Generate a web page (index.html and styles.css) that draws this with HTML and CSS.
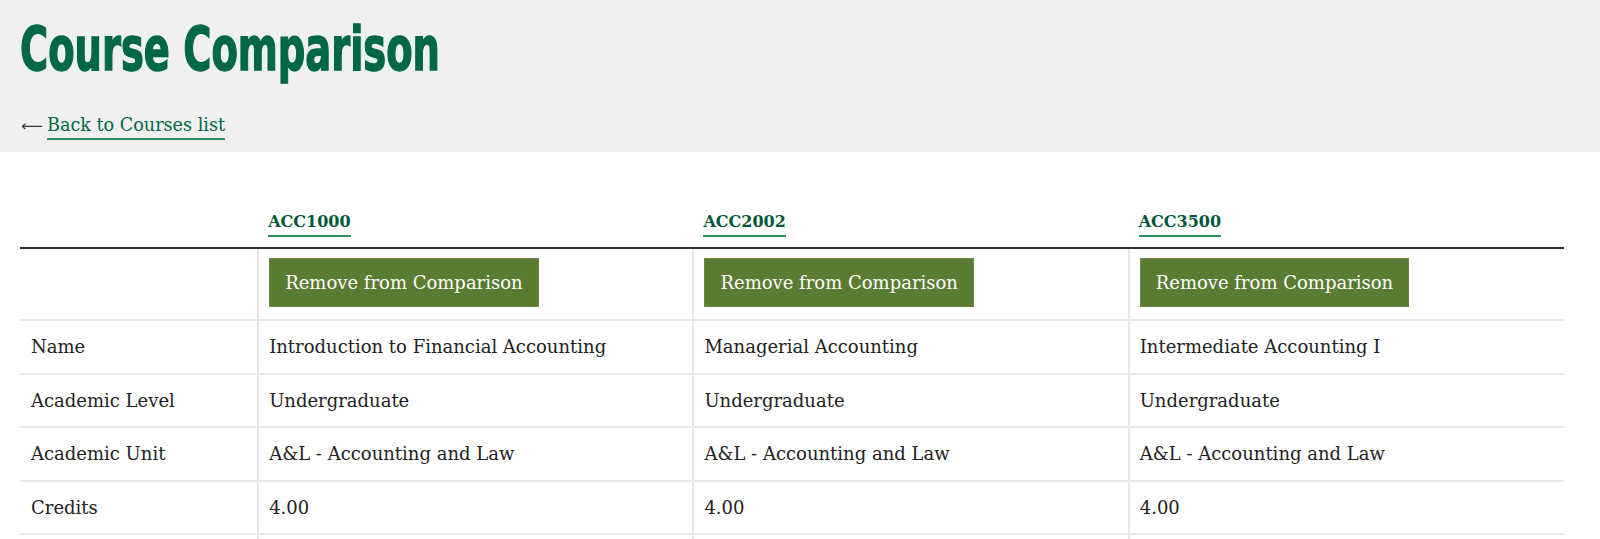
FILE: index.html
```html
<!DOCTYPE html>
<html lang="en">
<head>
<meta charset="utf-8">
<title>Course Comparison</title>
<link rel="stylesheet" href="styles.css">
</head>
<body>
<header class="page-header">
  <h1 class="page-title"><span class="title-text">Course Comparison</span></h1>
  <p class="back"><span class="arrow">&#x27F5;</span><a class="back-link" href="#">Back to Courses list</a></p>
</header>
<main class="content">
  <table class="compare">
    <colgroup>
      <col class="c-label">
      <col class="c-course">
      <col class="c-course">
      <col class="c-course">
    </colgroup>
    <thead>
      <tr>
        <th></th>
        <th><a class="code" href="#">ACC1000</a></th>
        <th><a class="code" href="#">ACC2002</a></th>
        <th><a class="code" href="#">ACC3500</a></th>
      </tr>
    </thead>
    <tbody>
      <tr class="btn-row">
        <td></td>
        <td><button class="remove" type="button">Remove from Comparison</button></td>
        <td><button class="remove" type="button">Remove from Comparison</button></td>
        <td><button class="remove" type="button">Remove from Comparison</button></td>
      </tr>
      <tr>
        <td>Name</td>
        <td>Introduction to Financial Accounting</td>
        <td>Managerial Accounting</td>
        <td>Intermediate Accounting I</td>
      </tr>
      <tr>
        <td>Academic Level</td>
        <td>Undergraduate</td>
        <td>Undergraduate</td>
        <td>Undergraduate</td>
      </tr>
      <tr>
        <td>Academic Unit</td>
        <td>A&amp;L - Accounting and Law</td>
        <td>A&amp;L - Accounting and Law</td>
        <td>A&amp;L - Accounting and Law</td>
      </tr>
      <tr>
        <td>Credits</td>
        <td>4.00</td>
        <td>4.00</td>
        <td>4.00</td>
      </tr>
      <tr>
        <td>&nbsp;</td>
        <td>&nbsp;</td>
        <td>&nbsp;</td>
        <td>&nbsp;</td>
      </tr>
    </tbody>
  </table>
</main>
</body>
</html>
```
FILE: styles.css
```css
* { box-sizing: border-box; }

html, body {
  margin: 0;
  padding: 0;
  background: #ffffff;
  color: #222222;
  font-family: "DejaVu Serif", "Liberation Serif", serif;
}

.page-header {
  background: #f0f0f0;
  height: 152px;
  padding: 13px 20px 0;
}

.page-title {
  margin: 0;
  font-family: "DejaVu Sans Condensed", "Liberation Sans", sans-serif;
  font-weight: 700;
  font-size: 61px;
  line-height: 72px;
  color: #006747;
}

.title-text {
  display: inline-block;
  transform: scaleX(0.7);
  transform-origin: left center;
  -webkit-text-stroke: 1.4px #006747;
}

.back {
  margin: 28px 0 0;
  font-size: 17.6px;
  line-height: 24px;
  display: flex;
  align-items: baseline;
}

.arrow {
  color: #333333;
  font-family: "DejaVu Sans", sans-serif;
  font-size: 15px;
  width: 26px;
  margin-left: 1px;
}

.back-link {
  color: #006747;
  text-decoration: none;
  border-bottom: 2px solid #2e8a60;
  padding-bottom: 1px;
}

.content {
  padding: 0 20px;
}

.compare {
  width: 1544px;
  margin-top: 55px;
  border-collapse: collapse;
  table-layout: fixed;
  font-size: 18px;
}

.c-label { width: 238px; }
.c-course { width: 435px; }

.compare thead th {
  text-align: left;
  padding: 0 10px 16px;
  border-bottom: 2px solid #333333;
  vertical-align: bottom;
  height: 41px;
}

.code {
  font-weight: 700;
  color: #00583a;
  text-decoration: none;
  border-bottom: 2px solid #2e8a60;
  padding-bottom: 4px;
  font-size: 16px;
}

.compare td {
  padding: 12px 11px;
  line-height: 27.5px;
  border-bottom: 2px solid #e8e8e8;
  vertical-align: middle;
}

.compare td + td {
  border-left: 2px solid #e3e7eb;
  padding-left: 10px;
}

.compare .btn-row td {
  padding-top: 9px;
  padding-bottom: 12px;
}

.remove {
  display: inline-block;
  background: #5a7b32;
  color: #ffffff;
  border: 1px solid #6b8a44;
  font-family: "DejaVu Serif", "Liberation Serif", serif;
  font-size: 18px;
  line-height: 25px;
  padding: 11px 15px;
  border-radius: 0;
  cursor: pointer;
}
```
